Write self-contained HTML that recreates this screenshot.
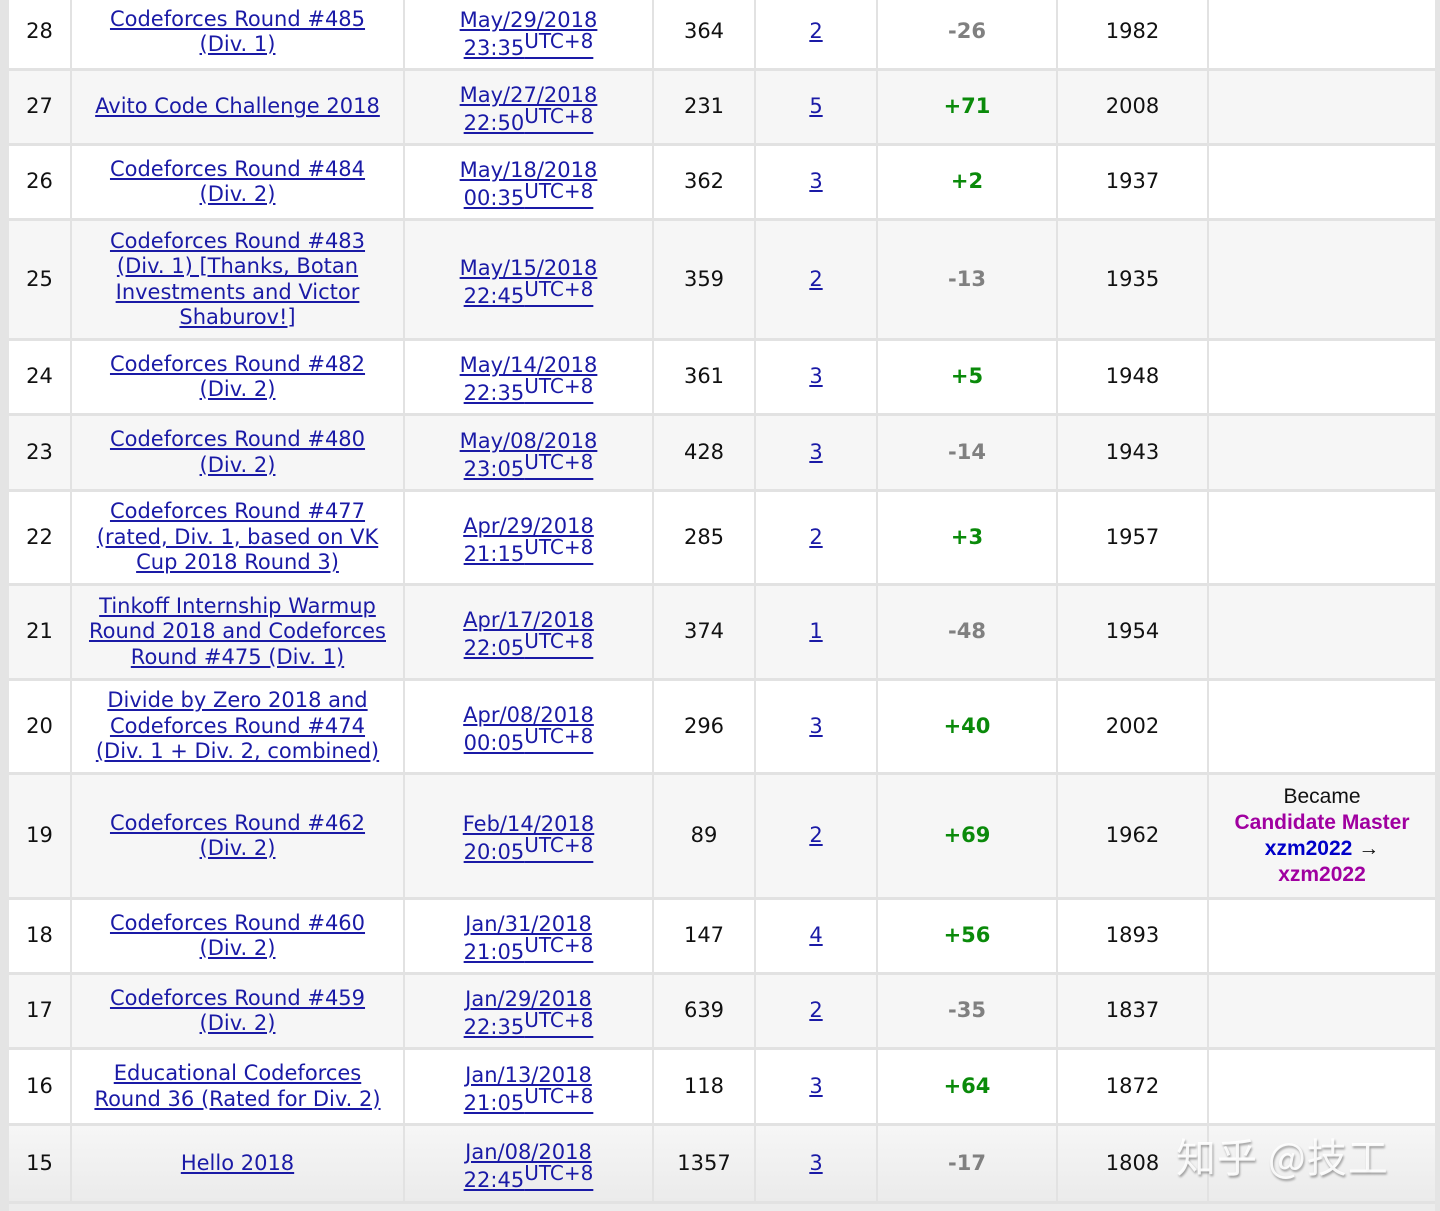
<!DOCTYPE html>
<html><head><meta charset="utf-8"><style>
html,body{margin:0;padding:0;}
body{width:1440px;height:1211px;position:relative;overflow:hidden;background:#fff;font-family:"DejaVu Sans","Liberation Sans",sans-serif;font-size:21px;color:#111;}
.lb{position:absolute;left:0;top:0;width:9px;height:1211px;background:#e4e4e4;}
.rb{position:absolute;left:1435px;top:0;width:5px;height:1211px;background:#e4e4e4;}
.row{position:absolute;left:9px;width:1426px;border-bottom:3px solid #e2e2e2;box-sizing:border-box;}
.g{background:#f6f6f6;}
.c{position:absolute;top:0;bottom:0;display:flex;align-items:center;justify-content:center;text-align:center;line-height:25.5px;border-left:2px solid #e2e2e2;box-sizing:border-box;white-space:nowrap;}
.c0{left:0;width:61px;border-left:none;}
.c1{left:61px;width:333px;}
.c2{left:394px;width:249px;line-height:28px;}
.c2 a{position:relative;top:2px;}
.c3{left:643px;width:102px;}
.c4{left:745px;width:122px;}
.c5{left:867px;width:180px;font-weight:bold;}
.c6{left:1047px;width:151px;}
.c7{left:1198px;width:228px;}
a{color:#1a1aa6;text-decoration:underline;}
sup{font-size:20px;line-height:0;vertical-align:0;position:relative;top:-7px;}
.up{color:#0a8a0a;}.dn{color:#808080;}
.note{font-family:"Liberation Sans",sans-serif;font-size:21px;line-height:26px;}
.cm{color:#a000a0;font-weight:bold;}.bl{color:#0000c8;font-weight:bold;}
.wm{position:absolute;left:1176px;top:1126px;font-family:"Noto Sans CJK SC",sans-serif;font-size:40px;color:rgba(255,255,255,0.9);text-shadow:1px 2px 2px rgba(0,0,0,0.35);letter-spacing:1px;}
.bot{position:absolute;left:9px;top:1204px;width:1426px;height:7px;background:#ececec;}
</style></head><body>
<div class="lb"></div><div class="rb"></div>

<div class="row" style="top:-4px;height:75px"><div class="c c0">28</div><div class="c c1"><a>Codeforces Round #485<br>(Div. 1)</a></div><div class="c c2"><a>May/29/2018<br>23:35<sup>UTC+8</sup></a></div><div class="c c3">364</div><div class="c c4"><a>2</a></div><div class="c c5 dn">-26</div><div class="c c6">1982</div><div class="c c7"></div></div>

<div class="row g" style="top:71px;height:75px"><div class="c c0">27</div><div class="c c1"><a>Avito Code Challenge 2018</a></div><div class="c c2"><a>May/27/2018<br>22:50<sup>UTC+8</sup></a></div><div class="c c3">231</div><div class="c c4"><a>5</a></div><div class="c c5 up">+71</div><div class="c c6">2008</div><div class="c c7"></div></div>

<div class="row" style="top:146px;height:75px"><div class="c c0">26</div><div class="c c1"><a>Codeforces Round #484<br>(Div. 2)</a></div><div class="c c2"><a>May/18/2018<br>00:35<sup>UTC+8</sup></a></div><div class="c c3">362</div><div class="c c4"><a>3</a></div><div class="c c5 up">+2</div><div class="c c6">1937</div><div class="c c7"></div></div>

<div class="row g" style="top:221px;height:120px"><div class="c c0">25</div><div class="c c1"><a>Codeforces Round #483<br>(Div. 1) [Thanks, Botan<br>Investments and Victor<br>Shaburov!]</a></div><div class="c c2"><a>May/15/2018<br>22:45<sup>UTC+8</sup></a></div><div class="c c3">359</div><div class="c c4"><a>2</a></div><div class="c c5 dn">-13</div><div class="c c6">1935</div><div class="c c7"></div></div>

<div class="row" style="top:341px;height:75px"><div class="c c0">24</div><div class="c c1"><a>Codeforces Round #482<br>(Div. 2)</a></div><div class="c c2"><a>May/14/2018<br>22:35<sup>UTC+8</sup></a></div><div class="c c3">361</div><div class="c c4"><a>3</a></div><div class="c c5 up">+5</div><div class="c c6">1948</div><div class="c c7"></div></div>

<div class="row g" style="top:416px;height:76px"><div class="c c0">23</div><div class="c c1"><a>Codeforces Round #480<br>(Div. 2)</a></div><div class="c c2"><a>May/08/2018<br>23:05<sup>UTC+8</sup></a></div><div class="c c3">428</div><div class="c c4"><a>3</a></div><div class="c c5 dn">-14</div><div class="c c6">1943</div><div class="c c7"></div></div>

<div class="row" style="top:492px;height:94px"><div class="c c0">22</div><div class="c c1"><a>Codeforces Round #477<br>(rated, Div. 1, based on VK<br>Cup 2018 Round 3)</a></div><div class="c c2"><a>Apr/29/2018<br>21:15<sup>UTC+8</sup></a></div><div class="c c3">285</div><div class="c c4"><a>2</a></div><div class="c c5 up">+3</div><div class="c c6">1957</div><div class="c c7"></div></div>

<div class="row g" style="top:586px;height:95px"><div class="c c0">21</div><div class="c c1"><a>Tinkoff Internship Warmup<br>Round 2018 and Codeforces<br>Round #475 (Div. 1)</a></div><div class="c c2"><a>Apr/17/2018<br>22:05<sup>UTC+8</sup></a></div><div class="c c3">374</div><div class="c c4"><a>1</a></div><div class="c c5 dn">-48</div><div class="c c6">1954</div><div class="c c7"></div></div>

<div class="row" style="top:681px;height:94px"><div class="c c0">20</div><div class="c c1"><a>Divide by Zero 2018 and<br>Codeforces Round #474<br>(Div. 1 + Div. 2, combined)</a></div><div class="c c2"><a>Apr/08/2018<br>00:05<sup>UTC+8</sup></a></div><div class="c c3">296</div><div class="c c4"><a>3</a></div><div class="c c5 up">+40</div><div class="c c6">2002</div><div class="c c7"></div></div>

<div class="row g" style="top:775px;height:125px"><div class="c c0">19</div><div class="c c1"><a>Codeforces Round #462<br>(Div. 2)</a></div><div class="c c2"><a>Feb/14/2018<br>20:05<sup>UTC+8</sup></a></div><div class="c c3">89</div><div class="c c4"><a>2</a></div><div class="c c5 up">+69</div><div class="c c6">1962</div><div class="c c7 note"><div>Became<br><span class="cm">Candidate Master</span><br><span class="bl">xzm2022</span> &rarr;<br><span class="cm">xzm2022</span></div></div></div>

<div class="row" style="top:900px;height:75px"><div class="c c0">18</div><div class="c c1"><a>Codeforces Round #460<br>(Div. 2)</a></div><div class="c c2"><a>Jan/31/2018<br>21:05<sup>UTC+8</sup></a></div><div class="c c3">147</div><div class="c c4"><a>4</a></div><div class="c c5 up">+56</div><div class="c c6">1893</div><div class="c c7"></div></div>

<div class="row g" style="top:975px;height:75px"><div class="c c0">17</div><div class="c c1"><a>Codeforces Round #459<br>(Div. 2)</a></div><div class="c c2"><a>Jan/29/2018<br>22:35<sup>UTC+8</sup></a></div><div class="c c3">639</div><div class="c c4"><a>2</a></div><div class="c c5 dn">-35</div><div class="c c6">1837</div><div class="c c7"></div></div>

<div class="row" style="top:1050px;height:76px"><div class="c c0">16</div><div class="c c1"><a>Educational Codeforces<br>Round 36 (Rated for Div. 2)</a></div><div class="c c2"><a>Jan/13/2018<br>21:05<sup>UTC+8</sup></a></div><div class="c c3">118</div><div class="c c4"><a>3</a></div><div class="c c5 up">+64</div><div class="c c6">1872</div><div class="c c7"></div></div>

<div class="row g" style="top:1126px;height:78px;background:linear-gradient(#f6f6f6,#ebebeb)"><div class="c c0">15</div><div class="c c1"><a>Hello 2018</a></div><div class="c c2"><a>Jan/08/2018<br>22:45<sup>UTC+8</sup></a></div><div class="c c3">1357</div><div class="c c4"><a>3</a></div><div class="c c5 dn">-17</div><div class="c c6">1808</div><div class="c c7"></div></div>

<div class="bot"></div>
<div class="wm">知乎 @技工</div>
</body></html>
